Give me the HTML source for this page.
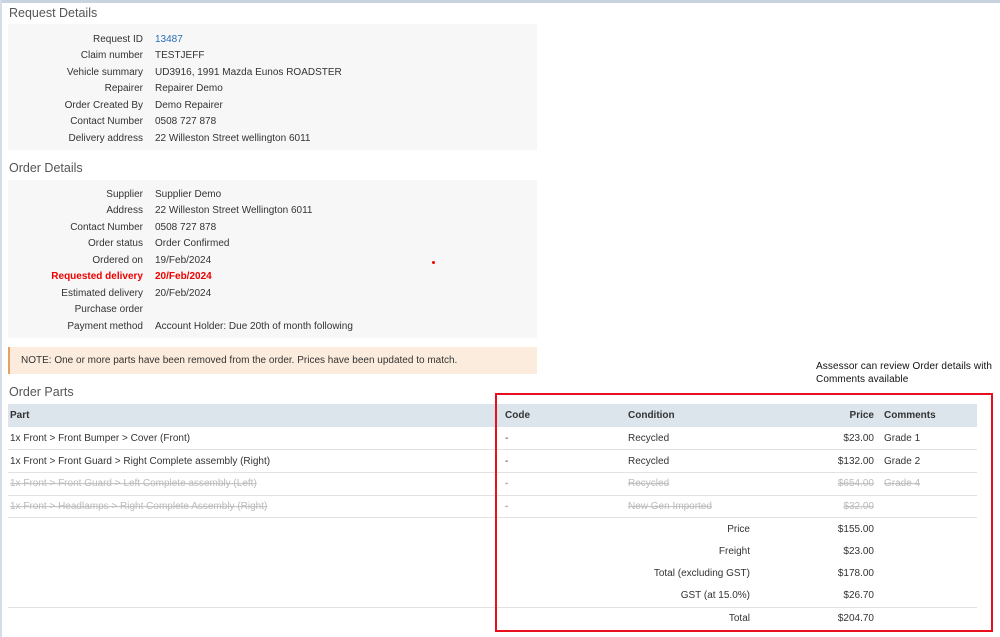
<!DOCTYPE html>
<html><head><style>
body{margin:0;width:1000px;height:637px;position:relative;background:#fff;font-family:"Liberation Sans",Arial,sans-serif;font-size:10px;color:#333;overflow:hidden}
.a{position:absolute;white-space:nowrap}
.h{font-size:12.5px;color:#555}
.box{position:absolute;left:8px;width:529px;background:#f7f7f7}
.l{position:absolute;right:395px;text-align:right;white-space:nowrap}
.v{position:absolute;left:155px;white-space:nowrap}
.r{position:absolute;white-space:nowrap;transform:translateY(-44%)}
.s{color:#bbb;text-decoration:line-through}
.line{position:absolute;left:8px;width:969px;height:1px;background:#e2e2e2}
</style></head><body>
<div class="a" style="left:0;top:0;width:1000px;height:3px;background:#c9d3e0"></div>
<div class="a" style="left:0;top:0;width:2px;height:637px;background:#d5dde8"></div>

<div class="a h" style="left:9px;top:6px">Request Details</div>
<div class="box" style="top:24px;height:126px"></div>
<div class="a h" style="left:9px;top:161px">Order Details</div>
<div class="box" style="top:180px;height:158px"></div>

<div style="position:absolute;left:0;top:0;width:538px">
<div class="l r" style="top:39px">Request ID</div><div class="v r" style="top:39px;color:#2a6ebb">13487</div>
<div class="l r" style="top:55px">Claim number</div><div class="v r" style="top:55px">TESTJEFF</div>
<div class="l r" style="top:72px">Vehicle summary</div><div class="v r" style="top:72px">UD3916, 1991 Mazda Eunos ROADSTER</div>
<div class="l r" style="top:88px">Repairer</div><div class="v r" style="top:88px">Repairer Demo</div>
<div class="l r" style="top:105px">Order Created By</div><div class="v r" style="top:105px">Demo Repairer</div>
<div class="l r" style="top:121px">Contact Number</div><div class="v r" style="top:121px">0508 727 878</div>
<div class="l r" style="top:138px">Delivery address</div><div class="v r" style="top:138px">22 Willeston Street wellington 6011</div>

<div class="l r" style="top:194px">Supplier</div><div class="v r" style="top:194px">Supplier Demo</div>
<div class="l r" style="top:210px">Address</div><div class="v r" style="top:210px">22 Willeston Street Wellington 6011</div>
<div class="l r" style="top:227px">Contact Number</div><div class="v r" style="top:227px">0508 727 878</div>
<div class="l r" style="top:243px">Order status</div><div class="v r" style="top:243px">Order Confirmed</div>
<div class="l r" style="top:260px">Ordered on</div><div class="v r" style="top:260px">19/Feb/2024</div>
<div class="l r" style="top:276px;color:#e00;font-weight:bold">Requested delivery</div><div class="v r" style="top:276px;color:#e00;font-weight:bold">20/Feb/2024</div>
<div class="l r" style="top:293px">Estimated delivery</div><div class="v r" style="top:293px">20/Feb/2024</div>
<div class="l r" style="top:309px">Purchase order</div>
<div class="l r" style="top:326px">Payment method</div><div class="v r" style="top:326px">Account Holder: Due 20th of month following</div>
</div>
<div class="a" style="left:432px;top:261px;width:3px;height:3px;border-radius:50%;background:#e00"></div>

<div class="a" style="left:8px;top:347px;width:527px;height:27px;background:#fbecdd;border-left:2px solid #e8a060"></div>
<div class="r" style="left:21px;top:360px">NOTE: One or more parts have been removed from the order. Prices have been updated to match.</div>

<div class="a h" style="left:9px;top:385px">Order Parts</div>
<div class="a" style="left:8px;top:404px;width:969px;height:23px;background:#dce5ec"></div>
<div class="r" style="left:10px;top:415px;font-weight:bold">Part</div>
<div class="r" style="left:505px;top:415px;font-weight:bold">Code</div>
<div class="r" style="left:628px;top:415px;font-weight:bold">Condition</div>
<div class="r" style="right:126px;top:415px;font-weight:bold">Price</div>
<div class="r" style="left:884px;top:415px;font-weight:bold">Comments</div>

<div class="r" style="left:10px;top:438px">1x Front &gt; Front Bumper &gt; Cover (Front)</div>
<div class="r" style="left:505px;top:438px">-</div><div class="r" style="left:628px;top:438px">Recycled</div>
<div class="r" style="right:126px;top:438px">$23.00</div><div class="r" style="left:884px;top:438px">Grade 1</div>
<div class="line" style="top:449px"></div>
<div class="r" style="left:10px;top:461px">1x Front &gt; Front Guard &gt; Right Complete assembly (Right)</div>
<div class="r" style="left:505px;top:461px">-</div><div class="r" style="left:628px;top:461px">Recycled</div>
<div class="r" style="right:126px;top:461px">$132.00</div><div class="r" style="left:884px;top:461px">Grade 2</div>
<div class="line" style="top:472px"></div>
<div class="r s" style="left:10px;top:483px">1x Front &gt; Front Guard &gt; Left Complete assembly (Left)</div>
<div class="r s" style="left:505px;top:483px">-</div><div class="r s" style="left:628px;top:483px">Recycled</div>
<div class="r s" style="right:126px;top:483px">$654.00</div><div class="r s" style="left:884px;top:483px">Grade 4</div>
<div class="line" style="top:495px"></div>
<div class="r s" style="left:10px;top:506px">1x Front &gt; Headlamps &gt; Right Complete Assembly (Right)</div>
<div class="r s" style="left:505px;top:506px">-</div><div class="r s" style="left:628px;top:506px">New Gen Imported</div>
<div class="r s" style="right:126px;top:506px">$32.00</div>
<div class="line" style="top:517px"></div>

<div class="r" style="right:250px;top:529px">Price</div><div class="r" style="right:126px;top:529px">$155.00</div>
<div class="r" style="right:250px;top:551px">Freight</div><div class="r" style="right:126px;top:551px">$23.00</div>
<div class="r" style="right:250px;top:573px">Total (excluding GST)</div><div class="r" style="right:126px;top:573px">$178.00</div>
<div class="r" style="right:250px;top:595px">GST (at 15.0%)</div><div class="r" style="right:126px;top:595px">$26.70</div>
<div class="line" style="top:607px"></div>
<div class="r" style="right:250px;top:618px">Total</div><div class="r" style="right:126px;top:618px">$204.70</div>

<div class="a" style="left:495px;top:393px;width:494px;height:235px;border:2px solid #e8101e"></div>
<div class="a" style="left:816px;top:360px;font-size:10px;color:#111;line-height:13px;letter-spacing:0.1px">Assessor can review Order details with<br>Comments available</div>
</body></html>
